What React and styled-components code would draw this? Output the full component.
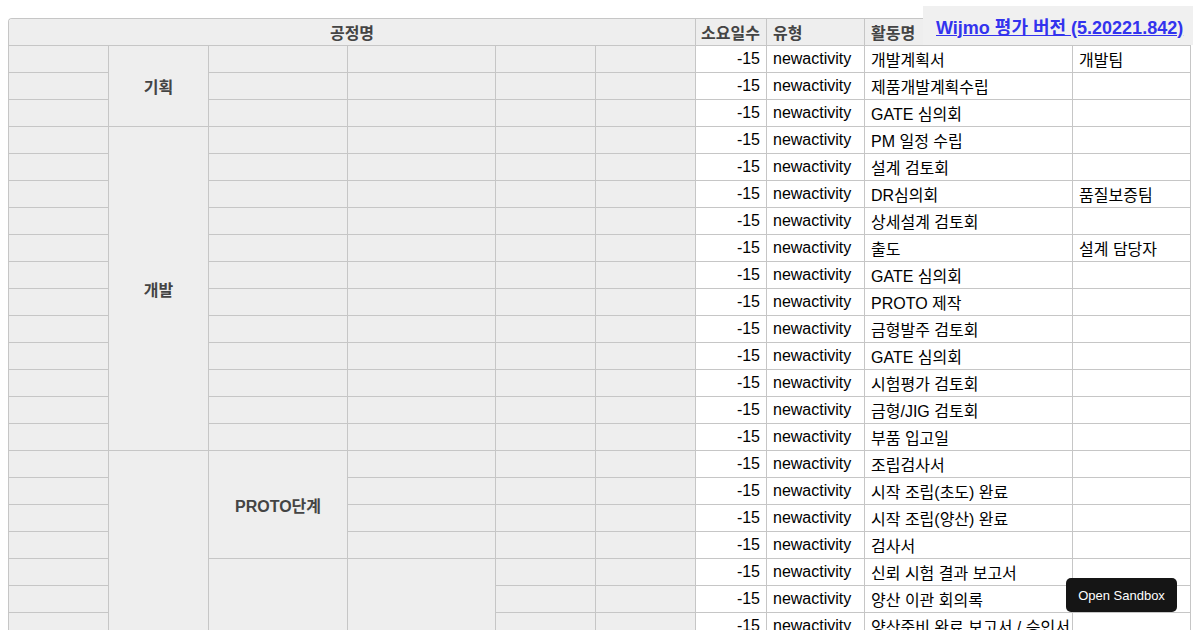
import React from "react";
import styled, { createGlobalStyle } from "styled-components";

const GlobalStyle = createGlobalStyle`
  html, body {
    margin: 0;
    padding: 0;
    background: #ffffff;
    overflow: hidden;
  }
  body {
    font-family: "Liberation Sans", Arial, "Noto Sans CJK KR", sans-serif;
    font-size: 16px;
    color: #000000;
  }
`;

const Page = styled.div`
  height: 100vh;
  overflow: hidden;
  padding: 18px 8px 0;
  box-sizing: border-box;
  position: relative;
`;

const Grid = styled.div`
  display: grid;
  grid-template-columns: 100px 100px 139px 148px 100px 100px 71px 98px 208px 118px;
  grid-auto-rows: 27px;
  width: fit-content;
  border-left: 1px solid #c6c6c6;
  border-top: 1px solid #c6c6c6;
  border-top-left-radius: 4px;
  overflow: hidden;
`;

const Cell = styled.div`
  grid-row: ${(p) => p.$r} / span ${(p) => p.$rs || 1};
  grid-column: ${(p) => p.$c} / span ${(p) => p.$cs || 1};
  box-sizing: border-box;
  border-right: 1px solid #c6c6c6;
  border-bottom: 1px solid #c6c6c6;
  background: ${(p) => (p.$gray ? "#eeeeee" : "#ffffff")};
  color: ${(p) => (p.$gray ? "#444444" : "#000000")};
  font-weight: ${(p) => (p.$bold ? "bold" : "normal")};
  display: flex;
  align-items: center;
  justify-content: ${(p) =>
    p.$align === "right" ? "flex-end" : p.$align === "center" ? "center" : "flex-start"};
  padding: 0 6px;
  white-space: nowrap;
  overflow: hidden;
`;

const Banner = styled.div`
  position: absolute;
  top: 6px;
  right: 7px;
  width: 270px;
  height: 39px;
  background: #f0f0f0;
  display: flex;
  align-items: center;
  padding-left: 13px;
  box-sizing: border-box;
`;

const BannerLink = styled.a`
  color: #3333ee;
  font-weight: bold;
  font-size: 18px;
  text-decoration: underline;
  white-space: nowrap;
`;

const SandboxButton = styled.button`
  position: fixed;
  right: 23px;
  bottom: 18px;
  width: 111px;
  height: 34px;
  background: #151515;
  color: #ffffff;
  border: none;
  border-radius: 5px;
  font-family: "Liberation Sans", Arial, sans-serif;
  font-size: 13px;
  cursor: pointer;
`;

const rows = [
  { name: "개발계획서", owner: "개발팀" },
  { name: "제품개발계획수립" },
  { name: "GATE 심의회" },
  { name: "PM 일정 수립" },
  { name: "설계 검토회" },
  { name: "DR심의회", owner: "품질보증팀" },
  { name: "상세설계 검토회" },
  { name: "출도", owner: "설계 담당자" },
  { name: "GATE 심의회" },
  { name: "PROTO 제작" },
  { name: "금형발주 검토회" },
  { name: "GATE 심의회" },
  { name: "시험평가 검토회" },
  { name: "금형/JIG 검토회" },
  { name: "부품 입고일" },
  { name: "조립검사서" },
  { name: "시작 조립(초도) 완료" },
  { name: "시작 조립(양산) 완료" },
  { name: "검사서" },
  { name: "신뢰 시험 결과 보고서" },
  { name: "양산 이관 회의록" },
  { name: "양산준비 완료 보고서 / 승인서" },
  { name: "양산 승인" },
  { name: "SOP 회의" },
];

// merged blocks in the grouped columns: [column, first row, span, label]
const merges = [
  [2, 1, 3, "기획"],
  [2, 4, 12, "개발"],
  [2, 16, 9, ""],
  [3, 16, 4, "PROTO단계"],
  [3, 20, 5, ""],
  [4, 20, 5, ""],
];

const isMerged = (col, row) =>
  merges.some(([c, r, s]) => c === col && row >= r && row < r + s);

const App = () => {
  const groupCells = [];
  rows.forEach((_, i) => {
    const row = i + 1;
    for (let col = 1; col <= 6; col++) {
      if (!isMerged(col, row)) {
        groupCells.push(<Cell key={`g${col}-${row}`} $r={row + 1} $c={col} $gray />);
      }
    }
  });

  return (
    <Page>
      <GlobalStyle />
      <Grid>
        <Cell $r={1} $c={1} $cs={6} $gray $bold $align="center">
          공정명
        </Cell>
        <Cell $r={1} $c={7} $gray $bold $align="right">
          소요일수
        </Cell>
        <Cell $r={1} $c={8} $gray $bold>
          유형
        </Cell>
        <Cell $r={1} $c={9} $gray $bold>
          활동명
        </Cell>
        <Cell $r={1} $c={10} $gray $bold />

        {groupCells}
        {merges.map(([c, r, s, label]) => (
          <Cell key={`m${c}-${r}`} $r={r + 1} $rs={s} $c={c} $gray $bold $align="center">
            {label}
          </Cell>
        ))}

        {rows.map((row, i) => (
          <React.Fragment key={i}>
            <Cell $r={i + 2} $c={7} $align="right">
              -15
            </Cell>
            <Cell $r={i + 2} $c={8}>newactivity</Cell>
            <Cell $r={i + 2} $c={9}>{row.name}</Cell>
            <Cell $r={i + 2} $c={10}>{row.owner}</Cell>
          </React.Fragment>
        ))}
      </Grid>
      <Banner>
        <BannerLink href="#">Wijmo 평가 버전 (5.20221.842)</BannerLink>
      </Banner>
      <SandboxButton>Open Sandbox</SandboxButton>
    </Page>
  );
};

export default App;
